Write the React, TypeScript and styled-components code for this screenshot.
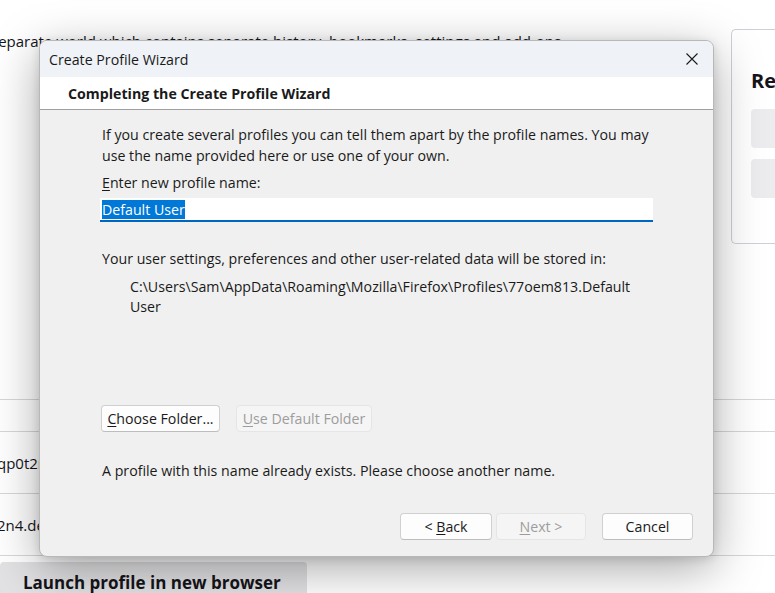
import React from 'react'
import styled, { createGlobalStyle } from 'styled-components'

const Global = createGlobalStyle`
  html, body {
    margin: 0;
    padding: 0;
    background: #fff;
  }
  body {
    font-family: "Open Sans", "Noto Sans", "Liberation Sans", sans-serif;
    color: #15141a;
  }
`

const Page = styled.div`
  position: relative;
  width: 775px;
  height: 593px;
  overflow: hidden;
  background: #fff;
`

const PageTop = styled.div`
  display: flex;
  justify-content: space-between;
  align-items: flex-start;
  padding-top: 29px;
  height: 370px;
`

const Intro = styled.p`
  margin: 2px 0 0 -9px;
  font-size: 15px;
  line-height: 20px;
  white-space: nowrap;
  color: #15141a;
`

const SideCard = styled.div`
  width: 60px;
  height: 215px;
  margin-right: -16px;
  border: 1px solid #cfcfd8;
  border-right: none;
  border-radius: 5px 0 0 5px;
  padding: 38px 0 0 19px;
  display: flex;
  flex-direction: column;
  gap: 11px;
  box-sizing: border-box;
`

const CardTitle = styled.div`
  font-size: 20px;
  font-weight: 700;
  line-height: 26px;
  margin-bottom: 4px;
`

const CardSlot = styled.div`
  height: 39px;
  border-radius: 4px;
  background: #ececee;
`

const Table = styled.div`
  border-top: 1px solid #d7d7db;
`

const Row = styled.div<{ $h: number }>`
  height: ${p => p.$h}px;
  border-bottom: 1px solid #d7d7db;
  display: flex;
  align-items: center;
  font-size: 15px;
  white-space: nowrap;
  box-sizing: border-box;
`

const Cell = styled.span`
  margin-left: -3px;
`

const LaunchButton = styled.div`
  margin-top: 6px;
  width: 307px;
  height: 40px;
  border-radius: 4px;
  background: #e2e2e4;
  font-size: 17px;
  font-weight: 700;
  padding: 9px 0 0 23px;
  box-sizing: border-box;
`

const Dialog = styled.div`
  position: absolute;
  left: 39px;
  top: 40px;
  width: 675px;
  height: 517px;
  border: 1px solid #b8b8b8;
  border-radius: 8px;
  overflow: hidden;
  box-sizing: border-box;
  display: flex;
  flex-direction: column;
  background: #f0f0f0;
  box-shadow: 0 12px 48px rgba(0, 0, 0, 0.34), 0 2px 10px rgba(0, 0, 0, 0.12);
  font-size: 14.2px;
  color: #1a1a1a;
`

const TitleBar = styled.div`
  height: 36px;
  flex: none;
  display: flex;
  align-items: center;
  justify-content: space-between;
  padding: 0 14px 0 9px;
  background: #eff3f8;
`

const Title = styled.span`
  font-size: 14.2px;
`

const CloseIcon = styled.svg`
  width: 12px;
  height: 12px;
  margin-right: 1px;
`

const Header = styled.div`
  height: 33px;
  flex: none;
  background: #fff;
  border-bottom: 1px solid #a0a0a0;
  display: flex;
  align-items: center;
  padding-left: 28px;
  font-weight: 700;
  box-sizing: border-box;
`

const Body = styled.div`
  flex: 1;
  display: flex;
  flex-direction: column;
  padding: 14px 20px 15px 62px;
`

const Text = styled.div<{ $mt?: number; $indent?: number }>`
  margin-top: ${p => p.$mt ?? 0}px;
  margin-left: ${p => p.$indent ?? 0}px;
  line-height: 21px;
  width: 565px;
`

const PathText = styled(Text)`
  line-height: 20px;
  width: 530px;
`

const Field = styled.div`
  margin: 5px 0 0 -2px;
  width: 553px;
  height: 24px;
  background: #fff;
  border-bottom: 2px solid #0067c0;
  box-sizing: border-box;
  padding: 2px 0 0 2px;
  line-height: 19px;
`

const Selected = styled.span`
  background: #0078d7;
  color: #fff;
`

const ButtonRow = styled.div<{ $end?: boolean; $mt: number }>`
  display: flex;
  gap: 16px;
  margin-top: ${p => p.$mt}px;
  margin-left: ${p => (p.$end ? 'auto' : '-1px')};
`

const Pair = styled.div`
  display: flex;
  gap: 4px;
`

const Button = styled.div<{ $w: number; $disabled?: boolean }>`
  width: ${p => p.$w}px;
  height: 27px;
  box-sizing: border-box;
  border: 1px solid ${p => (p.$disabled ? '#e5e5e5' : '#d0d0d0')};
  border-bottom-color: ${p => (p.$disabled ? '#e5e5e5' : '#bdbdbd')};
  border-radius: 4px;
  background: ${p => (p.$disabled ? '#f5f5f5' : '#fdfdfd')};
  color: ${p => (p.$disabled ? '#9d9d9d' : '#1a1a1a')};
  display: flex;
  align-items: center;
  justify-content: center;
  font-size: 14.2px;
`

const Key = styled.span`
  text-decoration: underline;
  text-underline-offset: 2px;
`

export default function App() {
  return (
    <Page>
      <Global />
      <PageTop>
        <Intro>separate world which contains separate history, bookmarks, settings and add-ons.</Intro>
        <SideCard>
          <CardTitle>Restart</CardTitle>
          <CardSlot />
          <CardSlot />
        </SideCard>
      </PageTop>
      <Table>
        <Row $h={32} />
        <Row $h={62}>
          <Cell>qp0t2nkd.default-release</Cell>
        </Row>
        <Row $h={62}>
          <Cell>2n4.default</Cell>
        </Row>
      </Table>
      <LaunchButton>Launch profile in new browser</LaunchButton>

      <Dialog>
        <TitleBar>
          <Title>Create Profile Wizard</Title>
          <CloseIcon viewBox="0 0 12 12">
            <path d="M0.5 0.5L11.5 11.5M11.5 0.5L0.5 11.5" stroke="#1a1a1a" strokeWidth="1.1" fill="none" />
          </CloseIcon>
        </TitleBar>
        <Header>Completing the Create Profile Wizard</Header>
        <Body>
          <Text>
            If you create several profiles you can tell them apart by the profile names. You may use the name
            provided here or use one of your own.
          </Text>
          <Text $mt={6}>
            <Key>E</Key>nter new profile name:
          </Text>
          <Field>
            <Selected>Default User</Selected>
          </Field>
          <Text $mt={26}>Your user settings, preferences and other user-related data will be stored in:</Text>
          <PathText $mt={8} $indent={28}>
            C:\Users\Sam\AppData\Roaming\Mozilla\Firefox\Profiles\77oem813.Default User
          </PathText>
          <ButtonRow $mt={88}>
            <Button $w={119}>
              <span>
                <Key>C</Key>hoose Folder...
              </span>
            </Button>
            <Button $w={136} $disabled>
              <span>
                <Key>U</Key>se Default Folder
              </span>
            </Button>
          </ButtonRow>
          <Text $mt={28}>A profile with this name already exists. Please choose another name.</Text>
          <ButtonRow $end $mt={32}>
            <Pair>
              <Button $w={92}>
                <span>
                  &lt; <Key>B</Key>ack
                </span>
              </Button>
              <Button $w={90} $disabled>
                <span>
                  <Key>N</Key>ext &gt;
                </span>
              </Button>
            </Pair>
            <Button $w={91}>Cancel</Button>
          </ButtonRow>
        </Body>
      </Dialog>
    </Page>
  )
}
